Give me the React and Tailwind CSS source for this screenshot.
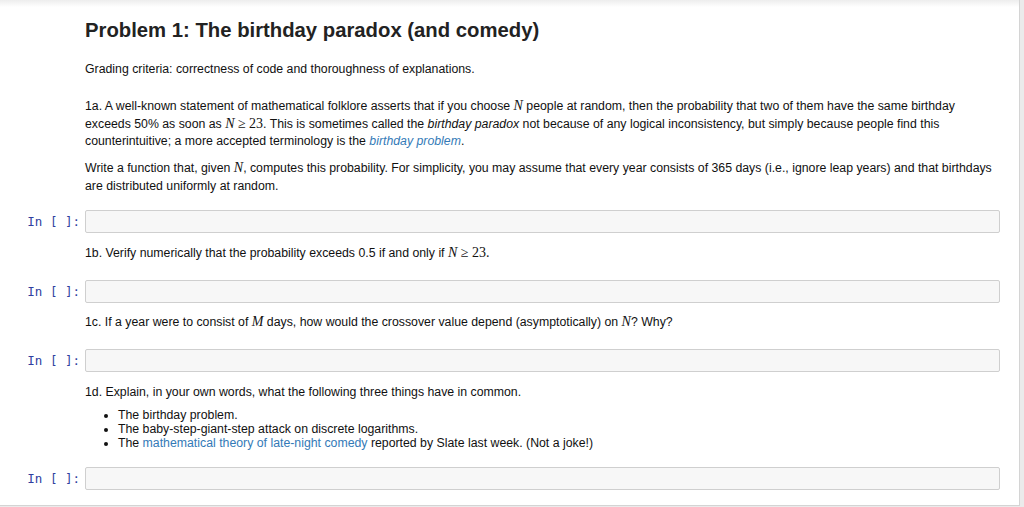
import React from 'react';

const sans = { fontFamily: '"Liberation Sans", Arial, sans-serif' };

// math in MathJax style
const M = ({ children }) => (
  <span className="font-['Liberation_Serif',serif] italic text-[14px] leading-[0]">{children}</span>
);
const R = ({ children }) => (
  <span className="font-['Liberation_Serif',serif] text-[14px] leading-[0]">{children}</span>
);

const Prompt = () => (
  <div className="w-[85px] shrink-0 pr-[5px] text-right font-['DejaVu_Sans_Mono',monospace] text-[12.5px] leading-[23px] text-[#303f9f]">
    In&nbsp;[&nbsp;]:
  </div>
);

const CodeCell = ({ className = '' }) => (
  <div className={`flex h-[23px] ${className}`}>
    <Prompt />
    <div className="h-[23px] w-[915px] rounded-[2px] border border-[#cfcfcf] bg-[#f7f7f7]" />
  </div>
);

const Text = ({ className = '', children }) => (
  <div className={`pl-[85px] pr-[20px] text-[12.3px] leading-[17.5px] text-[#111] ${className}`}>{children}</div>
);

const Link = ({ children, italic }) => (
  <span className={`text-[#337ab7] ${italic ? 'italic' : ''}`}>{children}</span>
);

export default function App() {
  return (
    <div className="flex h-[507px] w-[1024px] overflow-hidden bg-[#ebebeb]" style={sans}>
      <div className="flex h-[506px] w-[1020px] flex-col border-b border-r border-[#d4d4d4] bg-[linear-gradient(to_bottom,#ededed,#ffffff_7px)]">
        <h2 className="mt-[18px] pl-[85px] text-[20.3px] font-bold leading-[24px] text-[#222]">
          Problem 1: The birthday paradox (and comedy)
        </h2>

        <Text className="mt-[19px]">Grading criteria: correctness of code and thoroughness of explanations.</Text>

        <Text className="mt-[19.5px]">
          1a. A well-known statement of mathematical folklore asserts that if you choose <M>N</M> people at random, then the probability that two of them have the same birthday<br />
          exceeds 50% as soon as <M>N</M> <R>≥ 23</R>. This is sometimes called the <i>birthday paradox</i> not because of any logical inconsistency, but simply because people find this<br />
          counterintuitive; a more accepted terminology is the <Link italic>birthday problem</Link>.
        </Text>

        <Text className="mt-[9.5px]">
          Write a function that, given <M>N</M>, computes this probability. For simplicity, you may assume that every year consists of 365 days (i.e., ignore leap years) and that birthdays<br />
          are distributed uniformly at random.
        </Text>

        <CodeCell className="mt-[15px]" />

        <Text className="mt-[11.5px]">
          1b. Verify numerically that the probability exceeds 0.5 if and only if <M>N</M> <R>≥ 23.</R>
        </Text>

        <CodeCell className="mt-[18px]" />

        <Text className="mt-[11px]">
          1c. If a year were to consist of <M>M</M> days, how would the crossover value depend (asymptotically) on <M>N</M>? Why?
        </Text>

        <CodeCell className="mt-[17.5px]" />

        <Text className="mt-[12px]">1d. Explain, in your own words, what the following three things have in common.</Text>

        <ul className="mt-[6.5px] list-disc pl-[118px] text-[12.3px] leading-[14px] text-[#111]">
          <li>The birthday problem.</li>
          <li>The baby-step-giant-step attack on discrete logarithms.</li>
          <li>
            The <Link>mathematical theory of late-night comedy</Link> reported by Slate last week. (Not a joke!)
          </li>
        </ul>

        <CodeCell className="mt-[17px]" />
      </div>
    </div>
  );
}
